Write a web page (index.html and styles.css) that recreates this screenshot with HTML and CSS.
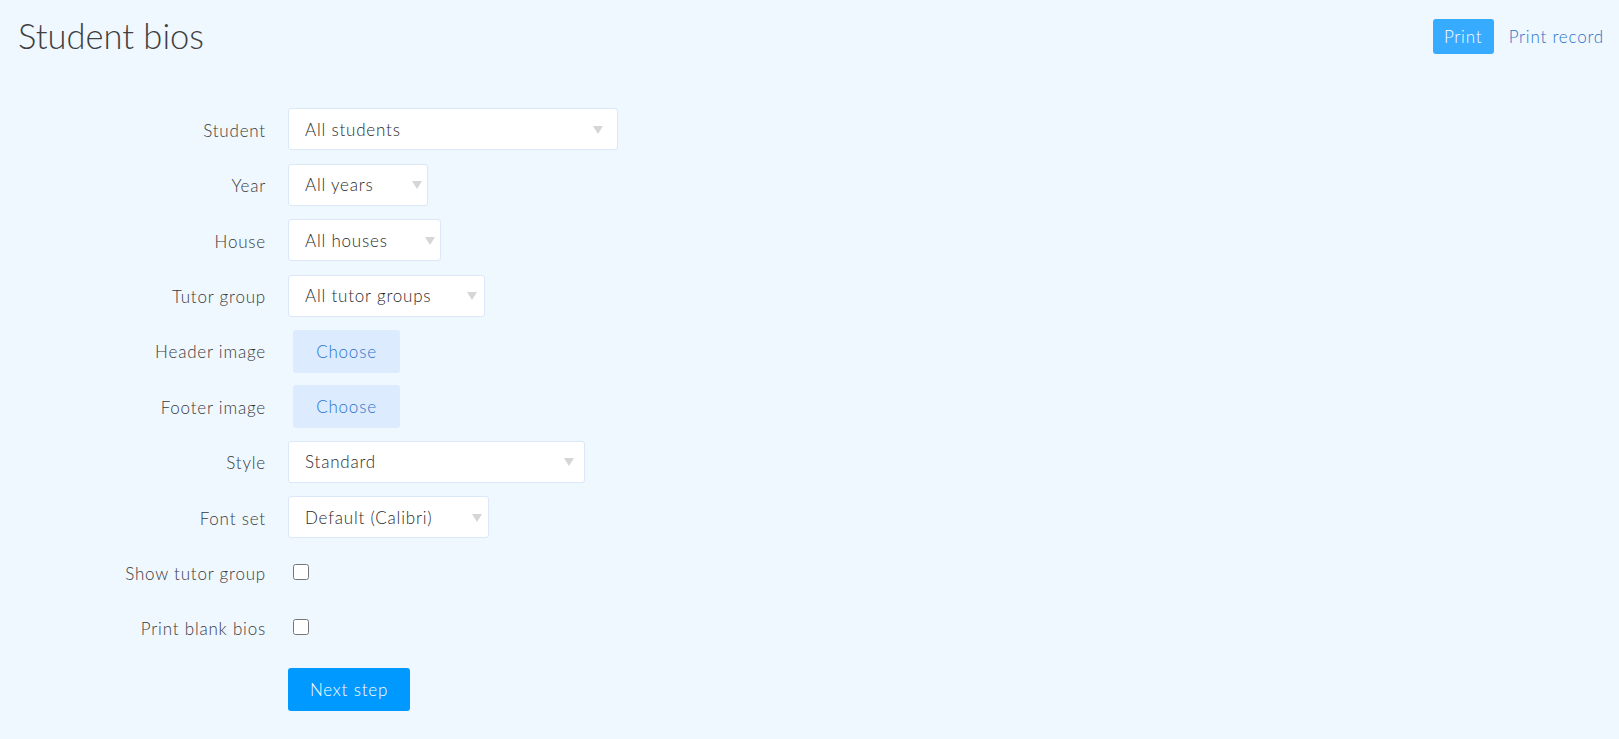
FILE: index.html
```html
<!DOCTYPE html>
<html lang="en">
<head>
<meta charset="utf-8">
<title>Student bios</title>
<link rel="stylesheet" href="styles.css">
</head>
<body>
<header class="page-header">
  <h1 class="page-title">Student bios</h1>
  <div class="header-actions">
    <button class="btn btn-print" type="button">Print</button>
    <a class="link-record" href="#">Print record</a>
  </div>
</header>

<form class="bio-form">
  <label class="field-label">Student</label>
  <div class="select select--student"><span class="select-text">All students</span><span class="select-arrow"></span></div>

  <label class="field-label">Year</label>
  <div class="select select--year"><span class="select-text">All years</span><span class="select-arrow"></span></div>

  <label class="field-label">House</label>
  <div class="select select--house"><span class="select-text">All houses</span><span class="select-arrow"></span></div>

  <label class="field-label">Tutor group</label>
  <div class="select select--tutor"><span class="select-text">All tutor groups</span><span class="select-arrow"></span></div>

  <label class="field-label">Header image</label>
  <button class="btn btn-choose" type="button">Choose</button>

  <label class="field-label">Footer image</label>
  <button class="btn btn-choose" type="button">Choose</button>

  <label class="field-label">Style</label>
  <div class="select select--style"><span class="select-text">Standard</span><span class="select-arrow"></span></div>

  <label class="field-label">Font set</label>
  <div class="select select--font"><span class="select-text">Default (Calibri)</span><span class="select-arrow"></span></div>

  <label class="field-label">Show tutor group</label>
  <input class="check" type="checkbox">

  <label class="field-label">Print blank bios</label>
  <input class="check" type="checkbox">

  <span class="field-spacer"></span>
  <button class="btn btn-next" type="button">Next step</button>
</form>
</body>
</html>
```

FILE: styles.css
```css
html, body {
  margin: 0;
  padding: 0;
}

body {
  background: #eff7ff;
  font-family: Lato, "Open Sans", sans-serif;
  color: #444;
  min-height: 739px;
}

.page-header {
  display: flex;
  justify-content: space-between;
  align-items: flex-start;
  padding: 0 15px 0 18px;
}

.page-title {
  margin: 15px 0 0;
  font-size: 34.5px;
  font-weight: 300;
  line-height: 1.2;
  color: #3f3f3f;
}

.header-actions {
  display: flex;
  align-items: center;
  gap: 15px;
  margin-top: 19px;
}

.btn {
  font-family: Lato, "Open Sans", sans-serif;
  font-weight: 300;
  letter-spacing: 0.8px;
  border: none;
  border-radius: 3px;
  cursor: pointer;
  font-size: 17px;
  padding: 0;
}

.btn-print {
  background: #36abff;
  color: #fff;
  width: 61px;
  height: 35px;
}

.link-record {
  color: #2a72c8;
  text-decoration: none;
  font-size: 17px;
  font-weight: 300;
  letter-spacing: 0.8px;
}

.bio-form {
  display: grid;
  grid-template-columns: 266px auto;
  grid-auto-rows: 42px;
  column-gap: 22px;
  row-gap: 13.43px;
  align-items: center;
  justify-items: start;
  margin-top: 52px;
}

.field-label {
  justify-self: end;
  font-size: 17px;
  font-weight: 300;
  letter-spacing: 0.8px;
  color: #3a3a3a;
  line-height: 1.2;
  padding-top: 3px;
}

.select {
  box-sizing: border-box;
  height: 42px;
  display: flex;
  align-items: center;
  background: #fff;
  border: 1px solid #dbe8f7;
  border-radius: 3px;
  padding-left: 16px;
  font-size: 17px;
  font-weight: 300;
  letter-spacing: 0.8px;
  color: #2a2a2a;
}

.select-text {
  flex: 1;
  white-space: nowrap;
}

.select-arrow {
  width: 0;
  height: 0;
  border-left: 5px solid transparent;
  border-right: 5px solid transparent;
  border-top: 8px solid #d6d6d6;
  margin-right: var(--arrow-right, 10px);
  margin-top: 1px;
}

.select--student { width: 330px; --arrow-right: 14px; }
.select--year    { width: 140px; --arrow-right: 5px; }
.select--house   { width: 153px; --arrow-right: 5px; }
.select--tutor   { width: 197px; --arrow-right: 7px; }
.select--style   { width: 297px; --arrow-right: 10px; }
.select--font    { width: 201px; --arrow-right: 6px; }

.btn-choose {
  background: #dcebfd;
  color: #2a74cc;
  width: 107px;
  height: 43px;
  margin-left: 5px;
}

.check {
  width: 16px;
  height: 16px;
  margin: 0 0 0 5px;
  position: relative;
  top: -1px;
}

.btn-next {
  background: #0099ff;
  color: #fff;
  width: 122px;
  height: 43px;
  margin-top: 12px;
}
```
